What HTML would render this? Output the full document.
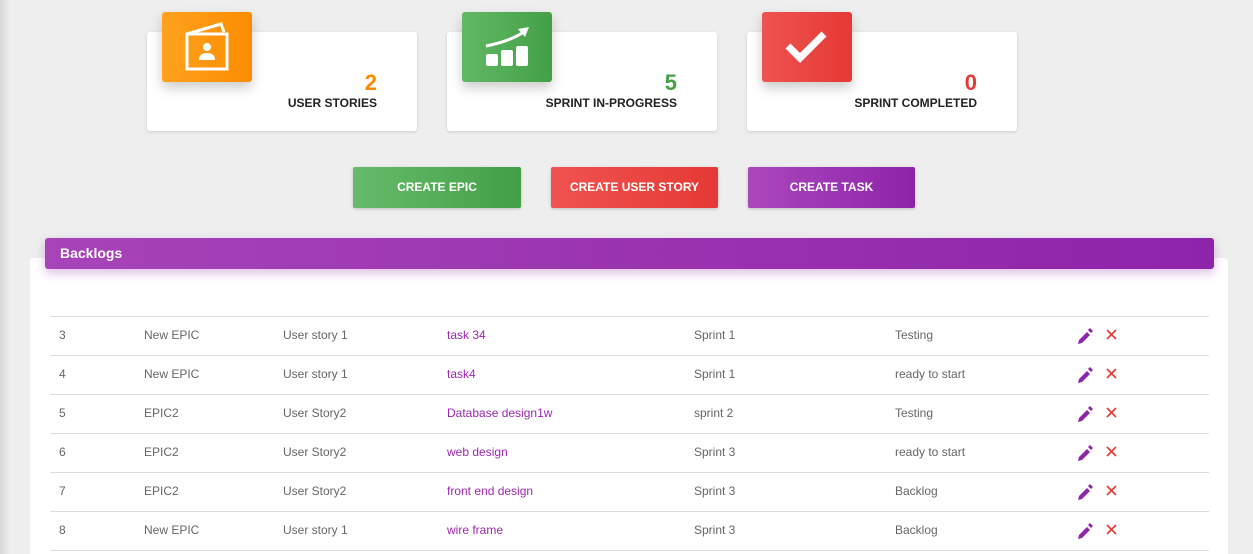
<!DOCTYPE html>
<html style="overflow:hidden;height:554px"><head><style>
body{margin:0;width:1253px;height:554px;overflow:hidden;background:#eeeeee;font-family:"Liberation Sans",sans-serif;position:relative}
.lshade{position:absolute;left:0;top:0;width:10px;height:554px;background:linear-gradient(90deg,#d8d8d8,#eee)}
.card{position:absolute;top:32px;width:270px;height:99px;background:#fff;border-radius:3px;box-shadow:0 1px 3px rgba(0,0,0,.15)}
.ic{position:absolute;top:12px;width:90px;height:70px;border-radius:3px;box-shadow:0 6px 12px rgba(0,0,0,.2)}
.num{position:absolute;right:40px;top:38px;font-size:22px;font-weight:bold}
.lab{position:absolute;right:40px;top:64px;font-size:12px;font-weight:bold;color:#222}
.btn{position:absolute;top:167px;height:41px;border-radius:2px;color:#fff;font-size:12px;font-weight:bold;text-align:center;line-height:41px;box-shadow:0 1px 3px rgba(0,0,0,.2)}
.panel{position:absolute;left:30px;top:258px;width:1198px;height:296px;background:#fff;border-radius:3px 3px 0 0}
.hdr{position:absolute;left:45px;top:238px;width:1169px;height:31px;border-radius:3px;background:linear-gradient(90deg,#a843b8,#8e24aa);box-shadow:0 4px 10px rgba(142,36,170,.3);color:#fff;font-weight:bold;font-size:14px;line-height:30px;padding-left:15px;box-sizing:border-box}
.row{position:absolute;left:50px;width:1159px;height:39px;border-top:1px solid #ddd;font-size:12px;color:#666}
.row span{position:absolute;top:11px}
.p{color:#9c27b0}
</style></head><body>
<div class="lshade"></div>
<div class="card" style="left:147px"><div class="num" style="color:#fb8c00">2</div><div class="lab">USER STORIES</div></div>
<div class="card" style="left:447px"><div class="num" style="color:#43a047">5</div><div class="lab">SPRINT IN-PROGRESS</div></div>
<div class="card" style="left:747px"><div class="num" style="color:#e53935">0</div><div class="lab">SPRINT COMPLETED</div></div>
<div class="ic" style="left:162px;background:linear-gradient(90deg,#ffa21f,#fb8c00)"><svg width="90" height="70"><path d="M25 22 L59 12 L62 20" fill="none" stroke="#fff" stroke-width="3"/><rect x="25" y="22" width="40" height="35" fill="none" stroke="#fff" stroke-width="3"/><circle cx="45" cy="35" r="4" fill="#fff"/><path d="M37 48 Q37 41 45 41 Q53 41 53 48 Z" fill="#fff"/></svg></div>
<div class="ic" style="left:462px;background:linear-gradient(90deg,#62b865,#43a047)"><svg width="90" height="70"><rect x="24" y="42" width="12" height="12" rx="2" fill="#fff"/><rect x="39" y="38" width="12" height="16" rx="2" fill="#fff"/><rect x="54" y="34" width="12" height="20" rx="2" fill="#fff"/><path d="M24 34 Q46 30 62 20" fill="none" stroke="#fff" stroke-width="3"/><path d="M56 17 L67 15 L63 25 Z" fill="#fff"/></svg></div>
<div class="ic" style="left:762px;background:linear-gradient(90deg,#ef5350,#e53935)"><svg width="90" height="70"><path d="M26 34 L38 46 L62 22" fill="none" stroke="#fff" stroke-width="7"/></svg></div>
<div class="btn" style="left:353px;width:168px;background:linear-gradient(90deg,#66bb6a,#43a047)">CREATE EPIC</div>
<div class="btn" style="left:551px;width:167px;background:linear-gradient(90deg,#ef5350,#e53935)">CREATE USER STORY</div>
<div class="btn" style="left:748px;width:167px;background:linear-gradient(90deg,#ab47bc,#8e24aa)">CREATE TASK</div>
<div class="panel"></div>
<div class="hdr">Backlogs</div>
<div class="row" style="top:316px"><span style="left:9px">3</span><span style="left:94px">New EPIC</span><span style="left:233px">User story 1</span><span class="p" style="left:397px">task 34</span><span style="left:644px">Sprint 1</span><span style="left:845px">Testing</span></div>
<div class="row" style="top:355px"><span style="left:9px">4</span><span style="left:94px">New EPIC</span><span style="left:233px">User story 1</span><span class="p" style="left:397px">task4</span><span style="left:644px">Sprint 1</span><span style="left:845px">ready to start</span></div>
<div class="row" style="top:394px"><span style="left:9px">5</span><span style="left:94px">EPIC2</span><span style="left:233px">User Story2</span><span class="p" style="left:397px">Database design1w</span><span style="left:644px">sprint 2</span><span style="left:845px">Testing</span></div>
<div class="row" style="top:433px"><span style="left:9px">6</span><span style="left:94px">EPIC2</span><span style="left:233px">User Story2</span><span class="p" style="left:397px">web design</span><span style="left:644px">Sprint 3</span><span style="left:845px">ready to start</span></div>
<div class="row" style="top:472px"><span style="left:9px">7</span><span style="left:94px">EPIC2</span><span style="left:233px">User Story2</span><span class="p" style="left:397px">front end design</span><span style="left:644px">Sprint 3</span><span style="left:845px">Backlog</span></div>
<div class="row" style="top:511px"><span style="left:9px">8</span><span style="left:94px">New EPIC</span><span style="left:233px">User story 1</span><span class="p" style="left:397px">wire frame</span><span style="left:644px">Sprint 3</span><span style="left:845px">Backlog</span></div>
<div class="row" style="top:550px;height:3px"></div>
<svg style="position:absolute;left:0;top:0" width="1253" height="554">
<g id="ic">
<path d="M1079 340 L1087 332 L1090 335 L1082 343 L1078 344 Z M1088 330 L1090 328 L1093 331 L1091 333 Z" fill="#8e24aa"/>
<path d="M1107 330 L1116 339 M1116 330 L1107 339" stroke="#e53935" stroke-width="1.6"/>
</g>
<use href="#ic" y="39"/><use href="#ic" y="78"/><use href="#ic" y="117"/><use href="#ic" y="156"/><use href="#ic" y="195"/>
</svg>
</body></html>
